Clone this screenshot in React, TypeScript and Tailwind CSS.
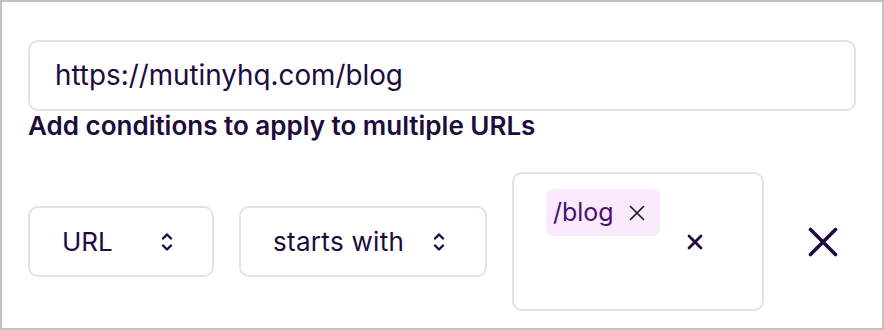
import React from "react";

function Chevrons() {
  return (
    <svg width="12" height="20" viewBox="0 0 12 20" fill="none" stroke="#200b3d" strokeWidth="2.4" strokeLinecap="round" strokeLinejoin="round">
      <path d="M2 6.5 L6 2.5 L10 6.5" />
      <path d="M2 13.5 L6 17.5 L10 13.5" />
    </svg>
  );
}

export default function App() {
  return (
    <div
      className="w-[884px] h-[330px] border-2 border-[#c0c0c0] bg-white pt-[38px] px-[26px] text-[#200b3d]"
      style={{ fontFamily: "Inter, 'Noto Sans', sans-serif" }}
    >
      <div className="h-[71px] w-[828px] rounded-[10px] border-2 border-[#e3e2e7] flex items-center pl-[25px] text-[27.8px]">
        https://mutinyhq.com/blog
      </div>
      <div className="text-[26px] font-semibold leading-[30px]">Add conditions to apply to multiple URLs</div>
      <div className="mt-[31px] flex items-center">
        <div className="w-[186px] h-[71px] rounded-[10px] border-2 border-[#e3e2e7] flex items-center justify-between pl-[32px] pr-[39px] text-[26px]">
          <span>URL</span>
          <Chevrons />
        </div>
        <div className="ml-[25px] w-[248px] h-[71px] rounded-[10px] border-2 border-[#e3e2e7] flex items-center justify-between pl-[32px] pr-[40px] text-[26px] tracking-[0.3px]">
          <span>starts with</span>
          <Chevrons />
        </div>
        <div className="ml-[25px] w-[252px] h-[139px] rounded-[10px] border-2 border-[#e3e2e7] flex items-center pl-[32px]">
          <div className="self-start mt-[15px] h-[47px] rounded-[7px] bg-[#fbe9fd] flex items-center pl-[7px] pr-[15px] text-[25px] text-[#4a0f72]">
            <span>/blog</span>
            <svg className="ml-[15px]" width="16" height="16" viewBox="0 0 16 16" fill="none" stroke="#111" strokeWidth="1.6" strokeLinecap="round">
              <path d="M1.5 1.5 L14.5 14.5 M14.5 1.5 L1.5 14.5" />
            </svg>
          </div>
          <svg className="ml-[27px]" width="16" height="16" viewBox="0 0 16 16" fill="none" stroke="#200b3d" strokeWidth="2.8" strokeLinecap="round">
            <path d="M2 2 L14 14 M14 2 L2 14" />
          </svg>
        </div>
        <svg className="ml-[44px]" width="30" height="30" viewBox="0 0 30 30" fill="none" stroke="#200b3d" strokeWidth="3.6" strokeLinecap="round">
          <path d="M2.5 2.5 L27.5 27.5 M27.5 2.5 L2.5 27.5" />
        </svg>
      </div>
    </div>
  );
}
